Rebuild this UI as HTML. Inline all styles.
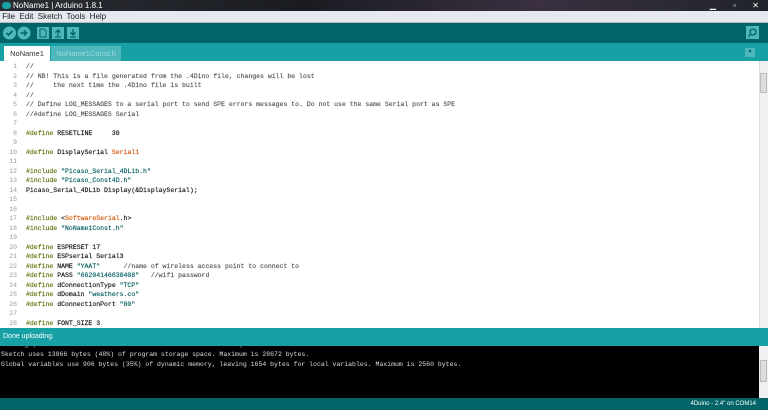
<!DOCTYPE html>
<html><head><meta charset="utf-8"><style>
*{margin:0;padding:0;box-sizing:border-box}
body{width:768px;height:410px;overflow:hidden;background:#fff;font-family:"Liberation Sans",sans-serif;position:relative}
.title{position:absolute;left:0;top:0;width:768px;height:11px;background:linear-gradient(90deg,#2a2d33,#1a1c22 40%,#3a3040 70%,#20242a);color:#fff;font-size:8px;line-height:11px}
.menu{position:absolute;left:0;top:11px;width:768px;height:12px;background:#e6e8f0;font-size:8px;line-height:12px;color:#222;border-bottom:1px solid #bbb}
.tool{position:absolute;left:0;top:23px;width:768px;height:20px;background:#006468}
.tabs{position:absolute;left:0;top:43px;width:768px;height:18px;background:#17a1a5}
.tab{position:absolute;top:3px;height:15px;font-size:7.5px;line-height:15px;text-align:center}
.editor{position:absolute;left:0;top:61px;width:768px;height:267px;background:#fff;overflow:hidden}
.ln{position:absolute;left:0;width:17px;text-align:right;color:#999;font:6.5px/9.5px "Liberation Mono",monospace}
.code{position:absolute;left:26px;white-space:pre;color:#111;font:6.5px/9.5px "Liberation Mono",monospace;-webkit-text-stroke:0.15px #111}
.k{color:#5E6D03;-webkit-text-stroke:0.15px #5E6D03}.o{color:#D35400;-webkit-text-stroke:0.15px #D35400}.s{color:#005C5F;-webkit-text-stroke:0.15px #005C5F}.c{color:#555;-webkit-text-stroke:0.15px #555}
.status{position:absolute;left:0;top:328px;width:768px;height:18px;background:#17a1a5;color:#fff;font-size:7px;line-height:18px;padding-left:3px}
.console{position:absolute;left:0;top:346px;width:768px;height:52px;background:#000;color:#ddd;font:6.5px/10px "Liberation Mono",monospace;white-space:pre;padding-left:1px;overflow:hidden}
.foot{position:absolute;left:0;top:398px;width:768px;height:12px;background:#006468;color:#fff;font-size:6px;line-height:12px;text-align:right;padding-right:12px}
</style></head><body>
<div class="title"><span style="display:inline-block;width:9px;height:7px;margin:2px 2px 0 2px;background:#17a1a5;border-radius:4px;vertical-align:top"></span>NoName1 | Arduino 1.8.1
<span style="position:absolute;right:52px;top:0">▁</span><span style="position:absolute;right:32px;top:0">▫</span><span style="position:absolute;right:9px;top:0">✕</span></div>
<div class="menu">&nbsp;File&nbsp; Edit&nbsp; Sketch&nbsp; Tools&nbsp; Help</div>
<div class="tool">
<svg width="768" height="20" style="position:absolute;left:0;top:0">
<circle cx="9.5" cy="10" r="6.5" fill="#4db7bb"/><path d="M6.5 10l2 2 4-4" stroke="#006468" stroke-width="1.6" fill="none"/>
<circle cx="24" cy="10" r="6.5" fill="#4db7bb"/><path d="M20.5 10h6M24 7.5l2.5 2.5-2.5 2.5" stroke="#006468" stroke-width="1.5" fill="none"/>
<rect x="37" y="4" width="12" height="12" fill="#4db7bb"/><path d="M40 6h4l2 2v6h-6z" fill="none" stroke="#006468"/>
<rect x="52" y="4" width="12" height="12" fill="#4db7bb"/><path d="M58 13V7M55.5 9.5L58 7l2.5 2.5M55 14h6" stroke="#006468" stroke-width="1.3" fill="none"/>
<rect x="67" y="4" width="12" height="12" fill="#4db7bb"/><path d="M73 6v6M70.5 9.5L73 12l2.5-2.5M70 14h6" stroke="#006468" stroke-width="1.3" fill="none"/>
<rect x="746" y="3" width="13" height="13" fill="#4db7bb"/><circle cx="753" cy="9" r="3" stroke="#006468" fill="none" stroke-width="1.3"/><path d="M750.5 11.5l-2 2" stroke="#006468" stroke-width="1.3"/>
</svg></div>
<div class="tabs">
<div class="tab" style="left:4px;width:46px;background:#fff;color:#333">NoName1</div>
<div class="tab" style="left:51px;width:70px;background:#4db7bb;color:#9dd8da">NoName1Const.h</div>
<div style="position:absolute;left:745px;top:5px;width:10px;height:9px;background:#4db7bb;color:#006468;font-size:6px;text-align:center;line-height:9px">▾</div>
</div>
<div class="editor">
<div class="ln" style="top:1px">1<br>2<br>3<br>4<br>5<br>6<br>7<br>8<br>9<br>10<br>11<br>12<br>13<br>14<br>15<br>16<br>17<br>18<br>19<br>20<br>21<br>22<br>23<br>24<br>25<br>26<br>27<br>28</div>
<div class="code" style="top:1px"><span class="c">//
// NB! This is a file generated from the .4Dino file, changes will be lost
//     the next time the .4Dino file is built
//
// Define LOG_MESSAGES to a serial port to send SPE errors messages to. Do not use the same Serial port as SPE
//#define LOG_MESSAGES Serial</span>

<span class="k">#define</span> RESETLINE     30

<span class="k">#define</span> DisplaySerial <span class="o">Serial1</span>

<span class="k">#include</span> <span class="s">"Picaso_Serial_4DLib.h"</span>
<span class="k">#include</span> <span class="s">"Picaso_Const4D.h"</span>
Picaso_Serial_4DLib Display(&amp;DisplaySerial);


<span class="k">#include</span> &lt;<span class="o">SoftwareSerial</span>.h&gt;
<span class="k">#include</span> <span class="s">"NoName1Const.h"</span>

<span class="k">#define</span> ESPRESET 17
<span class="k">#define</span> ESPserial Serial3
<span class="k">#define</span> NAME <span class="s">"YAAT"</span>      <span class="c">//name of wireless access point to connect to</span>
<span class="k">#define</span> PASS <span class="s">"66204146630408"</span>   <span class="c">//wifi password</span>
<span class="k">#define</span> dConnectionType <span class="s">"TCP"</span>
<span class="k">#define</span> dDomain <span class="s">"weathers.co"</span>
<span class="k">#define</span> dConnectionPort <span class="s">"80"</span>

<span class="k">#define</span> FONT_SIZE 3</div>
<div style="position:absolute;left:759px;top:0;width:9px;height:267px;background:#f0f0f0;border-left:1px solid #ddd"></div>
<div style="position:absolute;left:760px;top:12px;width:7px;height:20px;background:#ddd;border:1px solid #bbb"></div>
</div>
<div class="status">Done uploading.</div>
<div class="console"><div style="margin-top:-6px">Writing | ################################################## | 100% 0.58s</div>Sketch uses 13866 bytes (48%) of program storage space. Maximum is 28672 bytes.
Global variables use 906 bytes (35%) of dynamic memory, leaving 1654 bytes for local variables. Maximum is 2560 bytes.</div>
<div style="position:absolute;left:759px;top:346px;width:9px;height:52px;background:#f0f0f0"></div>
<div style="position:absolute;left:760px;top:360px;width:7px;height:22px;background:#ddd;border:1px solid #bbb"></div>
<div class="foot">4Duino - 2.4" on COM14</div>
</body></html>
